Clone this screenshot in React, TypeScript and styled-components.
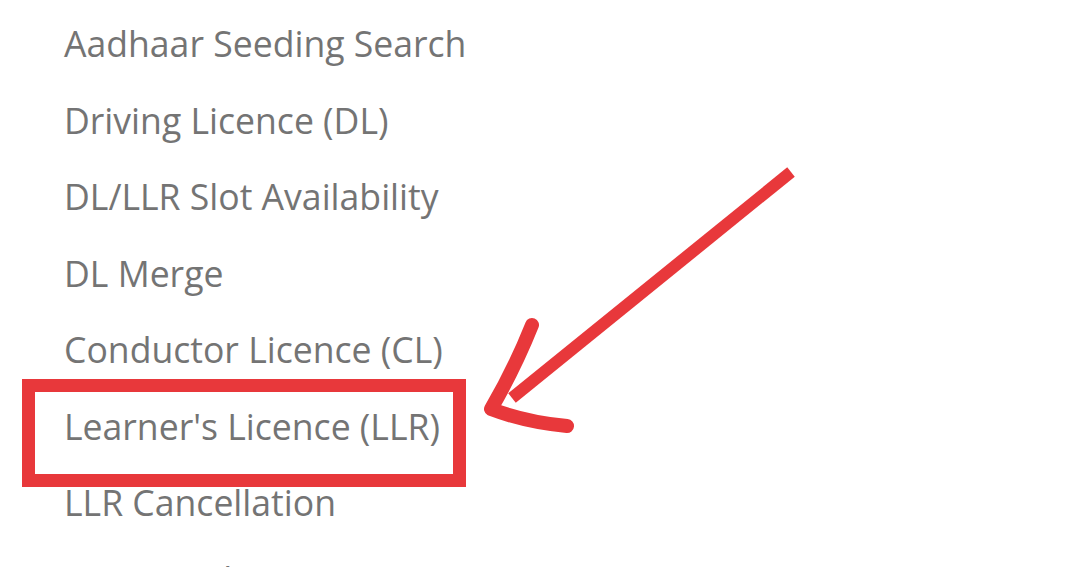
import React from "react";
import styled, { createGlobalStyle } from "styled-components";

const GlobalStyle = createGlobalStyle`
  html, body {
    margin: 0;
    padding: 0;
    background: #fff;
  }
  body {
    width: 1079px;
    height: 567px;
    overflow: hidden;
  }
`;

const Page = styled.div`
  position: relative;
  width: 1079px;
  height: 567px;
  overflow: hidden;
  background: #fff;
`;

const Menu = styled.ul`
  list-style: none;
  margin: 0;
  padding: 5px 0 0 64px;
  font-family: "Open Sans", "Noto Sans", sans-serif;
`;

const Item = styled.li`
  position: relative;
  height: 76.5px;
  line-height: 76.5px;
  font-size: 35.6px;
  color: #747474;
  white-space: nowrap;
`;

const Highlight = styled.div`
  position: absolute;
  left: -42px;
  top: -9px;
  width: 444px;
  height: 108px;
  box-sizing: border-box;
  border: 13px solid #e8383b;
`;

const Arrow = styled.svg`
  position: absolute;
  left: 0;
  top: 0;
  pointer-events: none;
`;

const items = [
  "Aadhaar Seeding Search",
  "Driving Licence (DL)",
  "DL/LLR Slot Availability",
  "DL Merge",
  "Conductor Licence (CL)",
  "Learner's Licence (LLR)",
  "LLR Cancellation",
  "LLR Search",
];

const App = () => {
  return (
    <Page>
      <GlobalStyle />
      <Menu>
        {items.map((label) => (
          <Item key={label}>
            {label}
            {label === "Learner's Licence (LLR)" && <Highlight />}
          </Item>
        ))}
      </Menu>
      <Arrow width="1079" height="567" viewBox="0 0 1079 567">
        <g fill="none" stroke="#e8383b" strokeLinecap="round" strokeLinejoin="round">
          <line x1="791" y1="172" x2="512" y2="398" strokeWidth="12" strokeLinecap="butt" />
          <path d="M532 325 C520 355 505 385 491 409 C520 420 545 424 567 426" strokeWidth="14" />
        </g>
      </Arrow>
    </Page>
  );
};

export default App;
